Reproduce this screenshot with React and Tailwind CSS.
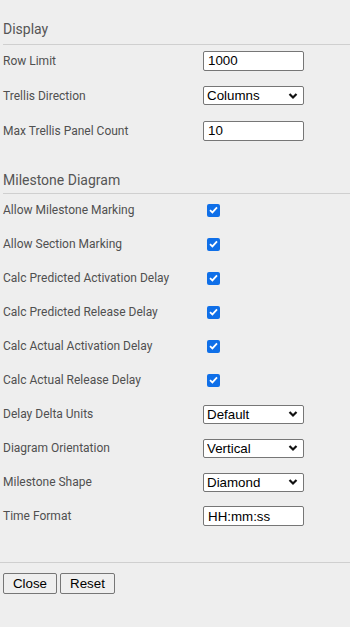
import React, { useState } from 'react';

const labelCls = "w-[200px] shrink-0 text-[12px] text-[#505050] font-['Roboto',sans-serif]";
const inputCls = "block w-[101px] h-[20px] border border-[#767676] bg-white rounded-[2px] pl-[4px] text-[13.33px] text-black font-['Liberation_Sans',Arial,sans-serif] outline-none";

const Chevron = () => (
  <svg className="pointer-events-none absolute right-[6px] top-1/2 -translate-y-1/2" width="10" height="7" viewBox="0 0 10 7">
    <polyline points="1.5,1.5 5,5 8.5,1.5" fill="none" stroke="#111" strokeWidth="2.2" />
  </svg>
);

const Select = ({ value, options, onChange }) => (
  <div className="relative w-[101px] h-[19px]">
    <select
      value={value}
      onChange={(e) => onChange(e.target.value)}
      className="block appearance-none w-full h-full border border-[#767676] bg-white rounded-[2px] pl-[3px] text-[13.33px] leading-[17px] text-black font-['Liberation_Sans',Arial,sans-serif] outline-none"
    >
      {options.map((o) => (
        <option key={o}>{o}</option>
      ))}
    </select>
    <Chevron />
  </div>
);

const Checkbox = ({ checked, onChange }) => (
  <button
    onClick={() => onChange(!checked)}
    className={`ml-[4px] w-[13px] h-[13px] rounded-[2px] flex items-center justify-center ${checked ? 'bg-[#0f6fe8]' : 'bg-white border border-[#767676]'}`}
  >
    {checked && (
      <svg width="9" height="8" viewBox="0 0 9 8">
        <polyline points="1,4.2 3.4,6.4 8,1.4" fill="none" stroke="white" strokeWidth="1.8" />
      </svg>
    )}
  </button>
);

const Heading = ({ children, className }) => (
  <div className={`ml-[3px] border-b border-[#cfcfcf] leading-[18px] text-[14px] text-[#555] font-['Roboto',sans-serif] ${className}`}>
    {children}
  </div>
);

const App = () => {
  const [rowLimit, setRowLimit] = useState('1000');
  const [direction, setDirection] = useState('Columns');
  const [panelCount, setPanelCount] = useState('10');
  const [checks, setChecks] = useState({
    milestone: true,
    section: true,
    predAct: true,
    predRel: true,
    actAct: true,
    actRel: true,
  });
  const [units, setUnits] = useState('Default');
  const [orientation, setOrientation] = useState('Vertical');
  const [shape, setShape] = useState('Diamond');
  const [timeFormat, setTimeFormat] = useState('HH:mm:ss');

  const checkRows = [
    ['milestone', 'Allow Milestone Marking'],
    ['section', 'Allow Section Marking'],
    ['predAct', 'Calc Predicted Activation Delay'],
    ['predRel', 'Calc Predicted Release Delay'],
    ['actAct', 'Calc Actual Activation Delay'],
    ['actRel', 'Calc Actual Release Delay'],
  ];

  return (
    <div className="min-h-screen w-[350px] bg-[#eeeeee]">
      {/* Display */}
      <Heading className="pt-[20px] pb-[6px]">Display</Heading>
      <div className="-mt-[2px] pl-[3px]">
        <div className="h-[35px] flex items-center">
          <span className={labelCls}>Row Limit</span>
          <input className={inputCls} value={rowLimit} onChange={(e) => setRowLimit(e.target.value)} />
        </div>
        <div className="h-[35px] flex items-center">
          <span className={labelCls}>Trellis Direction</span>
          <Select value={direction} onChange={setDirection} options={['Columns', 'Rows']} />
        </div>
        <div className="h-[35px] flex items-center">
          <span className={labelCls}>Max Trellis Panel Count</span>
          <input className={inputCls} value={panelCount} onChange={(e) => setPanelCount(e.target.value)} />
        </div>
      </div>

      {/* Milestone Diagram */}
      <Heading className="pt-[23px] pb-[4px]">Milestone Diagram</Heading>
      <div className="-mt-[1px] pl-[3px]">
        {checkRows.map(([key, label]) => (
          <div key={key} className="h-[34px] flex items-center">
            <span className={labelCls}>{label}</span>
            <Checkbox checked={checks[key]} onChange={(v) => setChecks({ ...checks, [key]: v })} />
          </div>
        ))}
        <div className="h-[34px] flex items-center">
          <span className={labelCls}>Delay Delta Units</span>
          <Select value={units} onChange={setUnits} options={['Default', 'Seconds', 'Minutes', 'Hours', 'Days']} />
        </div>
        <div className="h-[34px] flex items-center">
          <span className={labelCls}>Diagram Orientation</span>
          <Select value={orientation} onChange={setOrientation} options={['Vertical', 'Horizontal']} />
        </div>
        <div className="h-[34px] flex items-center">
          <span className={labelCls}>Milestone Shape</span>
          <Select value={shape} onChange={setShape} options={['Diamond', 'Circle', 'Square']} />
        </div>
        <div className="h-[34px] flex items-center">
          <span className={labelCls}>Time Format</span>
          <input className={inputCls} value={timeFormat} onChange={(e) => setTimeFormat(e.target.value)} />
        </div>
      </div>

      <div className="mt-[29px] border-t border-[#cfcfcf]" />
      <div className="mt-[10px] pl-[3px] flex gap-[3px]">
        <button className="w-[54px] h-[21px] border border-[#767676] bg-[#efefef] rounded-[2px] text-[13.33px] text-black font-['Liberation_Sans',Arial,sans-serif]">
          Close
        </button>
        <button className="w-[55px] h-[21px] border border-[#767676] bg-[#efefef] rounded-[2px] text-[13.33px] text-black font-['Liberation_Sans',Arial,sans-serif]">
          Reset
        </button>
      </div>
    </div>
  );
};

export default App;
